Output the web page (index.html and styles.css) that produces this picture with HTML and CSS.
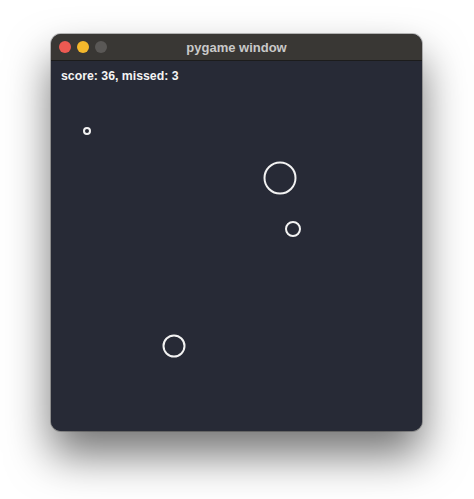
FILE: index.html
```html
<!DOCTYPE html>
<html>
<head>
<meta charset="utf-8">
<link rel="stylesheet" href="styles.css">
</head>
<body>
<div class="window">
  <div class="titlebar">
    <div class="lights">
      <span class="light red"></span>
      <span class="light yellow"></span>
      <span class="light gray"></span>
    </div>
    <div class="title">pygame window</div>
  </div>
  <div class="canvas">
    <div class="score">score: 36, missed: 3</div>
    <svg class="balls" width="371" height="370" viewBox="0 0 371 370">
      <g fill="none" stroke="#f2f2f2" stroke-width="2">
        <circle cx="36" cy="70" r="3"/>
        <circle cx="229" cy="117" r="15.5"/>
        <circle cx="242" cy="168" r="7"/>
        <circle cx="123" cy="285" r="10.5"/>
      </g>
    </svg>
  </div>
</div>
</body>
</html>
```
FILE: styles.css
```css
html, body {
  margin: 0;
  padding: 0;
  background: #ffffff;
}
body {
  padding: 34px 0 0 51px;
  width: 474px;
  height: 499px;
  box-sizing: border-box;
  overflow: hidden;
}
.window {
  width: 371px;
  height: 397px;
  border-radius: 10px;
  overflow: hidden;
  background: #272a36;
  box-shadow: 0 24px 44px rgba(0,0,0,0.55), 0 0 0 1px rgba(0,0,0,0.25);
  display: flex;
  flex-direction: column;
}
.titlebar {
  height: 26px;
  background: #393734;
  border-bottom: 1px solid #1c1c1c;
  display: flex;
  align-items: center;
  position: relative;
  flex-shrink: 0;
}
.lights {
  display: flex;
  gap: 6px;
  padding-left: 8px;
}
.light {
  width: 12px;
  height: 12px;
  border-radius: 50%;
  display: block;
}
.red { background: #ee5a52; }
.yellow { background: #f4b82c; }
.gray { background: #5a5856; }
.title {
  position: absolute;
  left: 0;
  right: 0;
  top: 0;
  bottom: 0;
  display: flex;
  align-items: center;
  justify-content: center;
  font-family: "Liberation Sans", Arial, sans-serif;
  font-weight: bold;
  font-size: 13px;
  color: #c9c9c9;
}
.canvas {
  flex: 1;
  position: relative;
  background: #272a36;
}
.score {
  position: absolute;
  left: 10px;
  top: 8px;
  font-family: "Liberation Sans", Arial, sans-serif;
  font-weight: bold;
  font-size: 12.3px;
  color: #f4f4f4;
}
.balls {
  display: block;
}
```
